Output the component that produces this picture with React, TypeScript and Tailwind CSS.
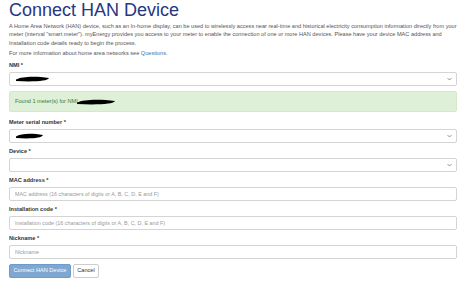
import React from 'react';

const font = { fontFamily: '"Liberation Sans", Arial, sans-serif' };

// black marker scribble used where the screenshot was redacted
function Redacted({ w, h }: { w: number; h: number }) {
    return (
        <svg width={w} height={h} viewBox={`0 0 ${w} ${h}`} className="inline-block align-middle">
            <path
                d={`M1 ${h * 0.6} C ${w * 0.2} ${h * 0.05}, ${w * 0.6} 0, ${w - 1} ${h * 0.35} C ${w - 2} ${h * 0.9}, ${w * 0.5} ${h}, 1 ${h * 0.85} Z`}
                fill="#000"
            />
        </svg>
    );
}

function Chevron() {
    return (
        <svg width="5" height="4" viewBox="0 0 5 4" className="shrink-0">
            <path d="M0.5 1 L2.5 3 L4.5 1" fill="none" stroke="#888" strokeWidth="0.9" />
        </svg>
    );
}

function FieldLabel({ children }: { children: React.ReactNode }) {
    return <div className="h-[8px] leading-[8px] text-[5.6px] font-bold text-[#333]">{children}</div>;
}

function SelectBox({ children }: { children?: React.ReactNode }) {
    return (
        <div className="mt-[3px] h-[14px] flex items-center justify-between border border-[#d4d4d4] rounded-[2px] bg-white pl-[5px] pr-[4px]">
            <div className="flex items-center">{children}</div>
            <Chevron />
        </div>
    );
}

function TextBox({ placeholder }: { placeholder: string }) {
    return (
        <div className="mt-[3px] h-[14px] flex items-center border border-[#d4d4d4] rounded-[2px] bg-white px-[5px] text-[5.4px] text-[#9a9a9a]">
            {placeholder}
        </div>
    );
}

export default function App() {
    return (
        <div className="w-[474px] h-[287px] bg-white overflow-hidden" style={font}>
            <div className="ml-[9px] w-[448px]">
                <h1 className="text-[18px] leading-[20px] text-[#28367f] font-normal">Connect HAN Device</h1>
                <p className="mt-[2px] text-[5.6px] leading-[8.3px] text-[#555]">
                    A Home Area Network (HAN) device, such as an In-home display, can be used to wirelessly access near
                    real-time and historical electricity consumption information directly from your meter (interval
                    "smart meter"). myEnergy provides you access to your meter to enable the connection of one or more
                    HAN devices. Please have your device MAC address and Installation code details ready to begin the
                    process.
                </p>
                <p className="mt-[2.5px] text-[5.6px] leading-[8.3px] text-[#555]">
                    For more information about home area networks see{' '}
                    <span className="text-[#337ab7]">Questions</span>.
                </p>

                <div className="mt-[3px]">
                    <FieldLabel>NMI *</FieldLabel>
                    <SelectBox>
                        <Redacted w={35} h={6} />
                    </SelectBox>
                </div>

                <div className="mt-[5px] h-[21px] flex items-center bg-[#dff0d8] border border-[#d6e9c6] rounded-[2px] px-[5px] text-[5.6px] text-[#3c763d]">
                    <span>Found 1 meter(s) for NMI</span>
                    <span className="-ml-[2px]">
                        <Redacted w={40} h={6} />
                    </span>
                </div>

                <div className="mt-[6px]">
                    <FieldLabel>Meter serial number *</FieldLabel>
                    <SelectBox>
                        <Redacted w={29} h={6} />
                    </SelectBox>
                </div>

                <div className="mt-[4px]">
                    <FieldLabel>Device *</FieldLabel>
                    <SelectBox />
                </div>

                <div className="mt-[4px]">
                    <FieldLabel>MAC address *</FieldLabel>
                    <TextBox placeholder="MAC address (16 characters of digits or A, B, C, D, E and F)" />
                </div>

                <div className="mt-[4px]">
                    <FieldLabel>Installation code *</FieldLabel>
                    <TextBox placeholder="Installation code (16 characters of digits or A, B, C, D, E and F)" />
                </div>

                <div className="mt-[4px]">
                    <FieldLabel>Nickname *</FieldLabel>
                    <TextBox placeholder="Nickname" />
                </div>

                <div className="mt-[5px] flex gap-[2px]">
                    <button className="h-[14px] w-[62px] rounded-[2px] bg-[#7ea7d2] border border-[#6f9bc9] text-white text-[5.6px]">
                        Connect HAN Device
                    </button>
                    <button className="h-[14px] w-[26px] rounded-[2px] bg-white border border-[#ccc] text-[#333] text-[5.6px]">
                        Cancel
                    </button>
                </div>
            </div>
        </div>
    );
}
